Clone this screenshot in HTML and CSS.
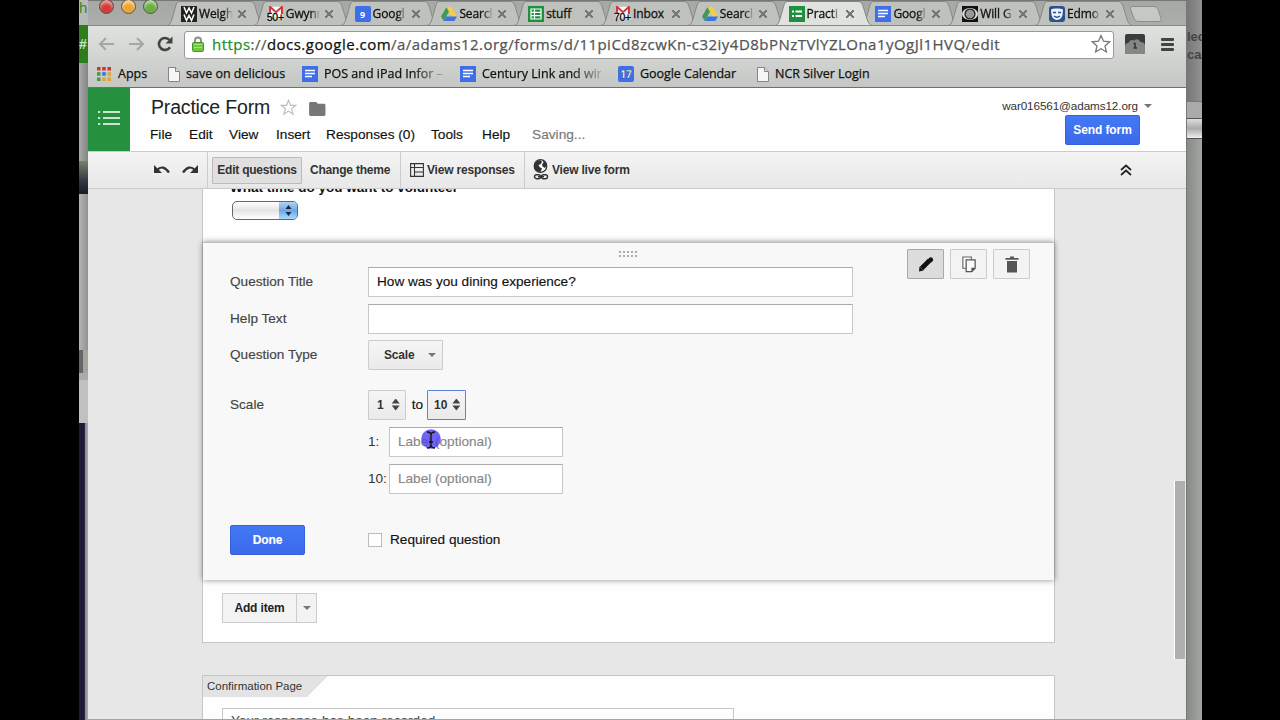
FILE: index.html
```html
<!DOCTYPE html>
<html lang="en">
<head>
<meta charset="utf-8">
<title>Practice Form</title>
<link rel="stylesheet" href="styles.css">
</head>
<body>
<svg width="0" height="0" class="defs">
  <symbol id="tab" viewBox="0 0 98 26"><path d="M0 25.5C3 25 4 22 5 19L9 5C10 2 11 1.500 13 1.500H83C86 1.500 87 3 88 6L92 19C93 22 94 25 98 25.500Z" stroke="#868886"/></symbol>
  <symbol id="doc" viewBox="0 0 16 16"><path fill="#3f6fe8" d="M0 0h16v16H0z"/><path stroke="#fff" stroke-width="1.500" d="M3 4.500h10M3 7.500h10M3 10.500h7"/></symbol>
  <symbol id="drive" viewBox="0 0 16 16"><path fill="#3c9b55" d="M5.500 1 0 10.500 2.700 15 8 5.500z"/><path fill="#f5cf3c" d="M5.500 1h5L16 10.500h-5.300z"/><path fill="#3f74dd" d="M5.300 10.500H16L13.300 15H2.700z"/></symbol>
  <symbol id="sheet" viewBox="0 0 16 16"><path fill="#1f8f40" d="M0 0h16v16H0z"/><path fill="none" stroke="#fff" stroke-width="1.200" d="M3 3h10v10H3zM3 6.300h10M3 9.600h10M6.500 3v10"/></symbol>
  <symbol id="form" viewBox="0 0 16 16"><path fill="#1f8f40" d="M0 0h16v16H0z"/><path stroke="#fff" stroke-width="1.800" d="M3 5.500h2M6.500 5.500H13M3 10h2M6.500 10H13"/></symbol>
  <symbol id="mail" viewBox="0 0 16 16"><path fill="#f7f7f5" stroke="#cfcac8" d="M.5.500h15v13H.5z"/><path fill="none" stroke="#d1303a" stroke-width="2.200" d="M1.200 9V1l6.800 6 6.800-6v8"/></symbol>
  <symbol id="page" viewBox="0 0 12 15"><path fill="#f6f6f6" stroke="#858585" d="M.5.500h7l4 4v10H.5z"/><path fill="#ddd" stroke="#858585" d="M7.500.500v4h4"/></symbol>
</svg>
<main class="desktop">
  <aside class="behind-left">
    <div class="bl bl-a">h</div><div class="bl bl-b">#</div><div class="bl bl-c"></div><div class="bl bl-d"></div><div class="bl bl-e"></div><div class="bl bl-f"></div><div class="bl bl-g"></div><div class="bl bl-h"></div>
  </aside>
  <section class="window">
    <div class="tabstrip">
      <div class="lights"><i class="red"></i><i class="amber"></i><i class="green"></i></div>
      <div class="tab"><svg class="shape"><use href="#tab"/></svg><svg class="fav" viewBox="0 0 16 16"><path fill="#222" d="M0 0h16v16H0z"/><path fill="none" stroke="#fff" stroke-width="1.500" d="M3 1 5.500 7 8 2l2.500 5L13 1M3 8.500l2.500 6 2.500-5 2.500 5 2.500-6"/></svg><span class="name">Weigh</span><b class="x"></b></div>
      <div class="tab"><svg class="shape"><use href="#tab"/></svg><span class="fav mail"><svg><use href="#mail"/></svg><em>50+</em></span><span class="name">Gwynn</span><b class="x"></b></div>
      <div class="tab"><svg class="shape"><use href="#tab"/></svg><span class="fav cal">9</span><span class="name">Googl</span><b class="x"></b></div>
      <div class="tab"><svg class="shape"><use href="#tab"/></svg><svg class="fav"><use href="#drive"/></svg><span class="name">Searcl</span><b class="x"></b></div>
      <div class="tab"><svg class="shape"><use href="#tab"/></svg><svg class="fav"><use href="#sheet"/></svg><span class="name whole">stuff</span><b class="x"></b></div>
      <div class="tab"><svg class="shape"><use href="#tab"/></svg><span class="fav mail"><svg><use href="#mail"/></svg><em>70+</em></span><span class="name whole">Inbox</span><b class="x"></b></div>
      <div class="tab"><svg class="shape"><use href="#tab"/></svg><svg class="fav"><use href="#drive"/></svg><span class="name">Searcl</span><b class="x"></b></div>
      <div class="tab active"><svg class="shape"><use href="#tab"/></svg><svg class="fav"><use href="#form"/></svg><span class="name">Practi</span><b class="x"></b></div>
      <div class="tab"><svg class="shape"><use href="#tab"/></svg><svg class="fav"><use href="#doc"/></svg><span class="name">Googl</span><b class="x"></b></div>
      <div class="tab"><svg class="shape"><use href="#tab"/></svg><svg class="fav" viewBox="0 0 16 16"><path fill="#111" d="M0 0h16v16H0z"/><ellipse cx="8" cy="8" rx="8" ry="6" fill="#ddd"/><circle cx="8" cy="8" r="5.600" fill="#222"/><circle cx="8" cy="8" r="4.300" fill="#999"/></svg><span class="name">Will G</span><b class="x"></b></div>
      <div class="tab"><svg class="shape"><use href="#tab"/></svg><svg class="fav" viewBox="0 0 16 16"><rect width="16" height="16" rx="3" fill="#2c4f8e"/><path fill="#e9f1fb" d="M2 3.500q3-1.500 6-1 3-.5 6 1l-.5 5.500q-1 4.500-5.500 5-4.500-.5-5.500-5z"/><path fill="none" stroke="#2c4f8e" stroke-width="1.300" d="M4 6.500h3M9 6.500h3M5 10q3 2.500 6 0"/></svg><span class="name">Edmo</span><b class="x"></b></div>
      <svg class="newtab" viewBox="0 0 34 18"><path fill="#c6c8c5" stroke="#8c8e8b" d="M3 1.500h22q3 0 4 3l3 9q1 3-2 3H9q-3 0-4-3L1.500 4q-.5-2 1.500-2.500z"/></svg>
    </div>
    <div class="chrome">
      <div class="navbar">
        <svg class="arrows" viewBox="0 0 48 16"><path fill="none" stroke="#a5a7a4" stroke-width="2" d="M16 8H2M8 2 2 8l6 6M31 8h14M39 2l6 6-6 6"/></svg>
        <svg class="reload" viewBox="0 0 16 16"><path fill="none" stroke="#444" stroke-width="2.600" d="M13 11.200A6 6 0 1 1 12.500 4"/><path fill="#444" d="M15.500.500v7h-7z"/></svg>
        <div class="omnibox">
          <svg class="lock" viewBox="0 0 12 16"><path fill="none" stroke="#8a8f94" stroke-width="2" d="M3 8V4.500a3 3 0 0 1 6 0V8"/><rect x=".5" y="6.500" width="11" height="9" rx="1" fill="#72c740" stroke="#459226"/><path stroke="#a4e17c" d="M2 8.500h8M2 11.500h8"/></svg>
          <span class="url"><span class="secure">https</span>://<span class="host">docs.google.com</span>/a/adams12.org/forms/d/11piCd8zcwKn-c32iy4D8bPNzTVlYZLOna1yOgJl1HVQ/edit</span>
          <svg class="star" viewBox="0 0 20 20"><path fill="#fff" stroke="#777" stroke-width="1.300" d="m10 1.500 2.500 5.700 6.200.600-4.700 4.100 1.400 6.100-5.400-3.200L4.600 18 6 11.900 1.300 7.800l6.200-.600z"/></svg>
        </div>
        <svg class="ext" viewBox="0 0 20 20"><rect width="20" height="20" rx="2" fill="#3b3d3c"/><path fill="#858786" d="M0 18v-5q0-4 3.500-4Q5 5 9 6.500q4-3 6.500 1.500Q20 8 20 12v6q0 2-2 2H2q-2 0-2-2z"/><path fill="none" stroke="#333" stroke-width="1.500" d="M8.500 9.500H10V14M8.500 14h3.500"/></svg>
        <div class="menu"><i></i><i></i><i></i></div>
      </div>
      <div class="bookmarks">
        <div class="bm b1"><svg viewBox="0 0 14 14"><path fill="#c8372d" d="M0 0h3.500v3.500H0zM5.200 0h3.500v3.500H5.200zM10.500 0H14v3.500h-3.500z"/><path fill="#3d9b4c" d="M0 5.200h3.500v3.500H0z"/><path fill="#3e70d5" d="M5.200 5.200h3.500v3.500H5.200z"/><path fill="#dfa52c" d="M10.500 5.200H14v3.500h-3.500zM5.200 10.500h3.500V14H5.200zM10.500 10.500H14V14h-3.500z"/><path fill="#3d9b4c" d="M0 10.500h3.500V14H0z"/></svg><span>Apps</span></div>
        <div class="bm b2"><svg class="pg"><use href="#page"/></svg><span>save on delicious</span></div>
        <div class="bm b3"><svg><use href="#doc"/></svg><span class="fade">POS and iPad Infor –</span></div>
        <div class="bm b4"><svg><use href="#doc"/></svg><span class="fade">Century Link and win</span></div>
        <div class="bm b5"><b class="cal">17</b><span>Google Calendar</span></div>
        <div class="bm b6"><svg class="pg"><use href="#page"/></svg><span>NCR Silver Login</span></div>
      </div>
    </div>
    <header class="header">
      <div class="logo"><svg viewBox="0 0 24 16"><path stroke="#fff" stroke-width="1.700" d="M6 2h17M6 8h17M6 14h17M1 2h2.200M1 8h2.200M1 14h2.200"/></svg></div>
      <div class="titles">
        <div class="titlerow"><h1>Practice Form</h1><svg class="tstar" viewBox="0 0 20 20"><path fill="#fff" stroke="#bbb" stroke-width="1.300" d="m10 1.500 2.300 6h6.200l-4.900 4 1.800 6.500-5.400-3.700L4.600 18l1.800-6.500-4.900-4h6.200z"/></svg><svg class="folder" viewBox="0 0 18 15"><path fill="#777" d="M1.500 0h6l2 2H16q1.500 0 1.500 1.500v10Q17.500 15 16 15H1.500Q0 15 0 13.500v-12Q0 0 1.500 0z"/></svg></div>
        <nav class="menubar"><span class="m1">File</span><span class="m2">Edit</span><span class="m3">View</span><span class="m4">Insert</span><span class="m5">Responses (0)</span><span class="m6">Tools</span><span class="m7">Help</span><span class="saving">Saving...</span></nav>
      </div>
      <div class="account"><div class="email">war016561@adams12.org<i class="caret"></i></div><button class="blue send">Send form</button></div>
    </header>
    <div class="toolbar">
      <div class="undo"><svg viewBox="0 0 16 10"><path fill="none" stroke="#333" stroke-width="2.200" d="M3 6q6-6 12 2.500"/><path fill="#333" d="M0 1v8h8z"/></svg><svg viewBox="0 0 16 10"><path fill="none" stroke="#333" stroke-width="2.200" d="M13 6Q7 0 1 8.500"/><path fill="#333" d="M16 1v8H8z"/></svg></div>
      <div class="modes"><span class="pressed">Edit questions</span><span class="theme">Change theme</span></div>
      <div class="responses"><svg viewBox="0 0 14 14"><path fill="none" stroke="#333" stroke-width="1.100" d="M.6.600h12.800v12.800H.6zM.6 4.500h12.800M4.500.600v12.800M4.500 9h9"/></svg>View responses</div>
      <div class="live"><svg viewBox="0 0 16 21"><circle cx="7.500" cy="7" r="6.300" fill="#fff" stroke="#333" stroke-width="1.200"/><path fill="#333" d="M1 7.500Q1.500 2 7 1l2 1.500L8 5 5.500 6l1 2L9 9.500 7.500 13Q1.500 12.500 1 7.500zM9.500 1q4 1.500 4.300 5.500L12 9l-2.500-1.500L9 5l1.500-1z"/><g fill="none" stroke="#333" stroke-width="1.400"><rect x="1.500" y="15.700" width="6" height="4" rx="2"/><rect x="8.500" y="15.700" width="6" height="4" rx="2"/><path d="M5 17.700h6"/></g></svg>View live form</div>
      <svg class="collapse" viewBox="0 0 12 12"><path fill="none" stroke="#222" stroke-width="1.700" d="m1 6 5-4.500L11 6M1 11l5-4.500 5 4.500"/></svg>
    </div>
    <div class="content">
      <div class="card questions">
        <div class="prev"><div class="ptitle">What time do you want to volunteer</div><div class="macselect"><i><svg viewBox="0 0 7 11"><path fill="#1b2a3c" d="m3.500 0 3 4h-6zM3.500 11l3-4h-6z"/></svg></i></div></div>
        <div class="editor">
          <div class="grip"><i></i><i></i><i></i><i></i><i></i><i></i><i></i><i></i><i></i><i></i></div>
          <div class="actions">
            <span class="act on"><svg viewBox="0 0 16 16"><path stroke="#111" stroke-width="4.600" d="m3.500 12 8-8"/><path fill="#111" d="m1 15 .500-5 4 4zM11 1.500q2-1.500 3.500 0t0 3.500L13 6l-3-3z"/></svg></span>
            <span class="act"><svg viewBox="0 0 16 18"><path fill="#fafafa" stroke="#666" stroke-width="1.200" d="M1.500 1h9v12h-9z"/><path fill="#fafafa" stroke="#555" stroke-width="1.300" d="M5 4h9.500v9L11 16.500H5z"/><path fill="#555" d="M10.500 12.500H15l-4.500 4.500z"/></svg></span>
            <span class="act"><svg viewBox="0 0 14 17"><path fill="#555" d="M5 .500h4V2h4.500v1.700H.5V2H5zM2 5h10v11.500H2z"/></svg></span>
          </div>
          <div class="row r1"><label>Question Title</label><div class="field wide">How was you dining experience?</div></div>
          <div class="row r2"><label>Help Text</label><div class="field wide"></div></div>
          <div class="row r3"><label>Question Type</label><div class="btn type">Scale<i class="caret"></i></div></div>
          <div class="row r4"><label>Scale</label><div class="btn num">1<i class="spin"></i></div><span class="to">to</span><div class="btn num focus">10<i class="spin"></i></div></div>
          <div class="row r5"><label></label><span class="n">1:</span><div class="field opt">Label (optional)</div></div>
          <div class="row r6"><label></label><span class="n">10:</span><div class="field opt">Label (optional)</div></div>
          <div class="row r7"><label><button class="blue done">Done</button></label><i class="check"></i><span class="req">Required question</span></div>
          <svg class="pointer" viewBox="0 0 22 24"><circle cx="11" cy="11" r="9.800" fill="#4b3ff0" opacity=".8"/><path fill="none" stroke="#111" stroke-width="1.300" d="M7 4q4 0 4 3 0-3 4-3M11 7v10M7 20q4 0 4-3 0 3 4 3M9 14h4"/></svg>
        </div>
        <div class="additem"><span>Add item</span><b><i class="caret"></i></b></div>
      </div>
      <div class="card confirm"><div class="ctab">Confirmation Page</div><div class="cfield">Your response has been recorded.</div></div>
      <i class="scroll"></i>
    </div>
  </section>
  <aside class="behind-right"><div class="br-a">lec<br>ca</div><div class="br-b"></div><div class="br-c"></div><div class="br-d"></div></aside>
</main>
</body>
</html>
```

FILE: styles.css
```css
*{box-sizing:border-box}
body{margin:0;background:#000;font-family:"Liberation Sans",Arial,sans-serif;overflow:hidden}
svg{display:block;flex:none}
i,em{font-style:normal}
.defs{position:absolute}
.desktop{display:flex;width:1280px;height:720px;padding-left:79px;background:#000;overflow:hidden}
.behind-left{width:9px;display:flex;flex-direction:column;flex:none;overflow:hidden}
.bl{flex:none;overflow:hidden}
.bl-a{height:25px;background:#b8bab8;color:#348a24;font:15px/15px "Liberation Sans",sans-serif}
.bl-b{height:38px;background:#2d7d1d;color:#c9dfc5;font:bold 14px/38px "Liberation Sans",sans-serif}
.bl-c{height:98px;background:linear-gradient(90deg,#aaa,#838383)}
.bl-d{height:33px;background:linear-gradient(#75806f,#333842 60%,#161b28)}
.bl-e{height:156px;background:linear-gradient(90deg,#b5b5b5,#929292)}
.bl-f{height:23px;background:linear-gradient(90deg,#666 45%,#a4a49a 45%)}
.bl-g{height:50px;background:#c0c0c0;border-top:7px solid #aaa}
.bl-h{flex:1;background:linear-gradient(90deg,#1d1b35 60%,#8c8993 70%,#aaa)}
.window{width:1098px;flex:none;height:720px;display:flex;flex-direction:column;border-bottom:1px solid #a4a6a4;overflow:hidden}
.behind-right{width:16px;flex:none;display:flex;flex-direction:column;border-left:1px solid #777;background:linear-gradient(90deg,#888b88,#a2a5a2);overflow:hidden}
.br-a{height:101px;padding-top:28px;color:#444;font:bold 13px/18px "Liberation Sans",sans-serif;background:linear-gradient(90deg,#777,#929292)}
.br-b{height:17px;background:#a9aba9;border-top:1px solid #777}
.br-c{height:21px;background:linear-gradient(#ddd,#aaa,#eee);border:solid #555;border-width:1px 0}
.br-d{flex:1}
.tabstrip{height:26px;flex:none;display:flex;background:linear-gradient(#a6a8a6,#acaeac);border-top:1px solid #777;border-bottom:1px solid #868886}
.lights{width:79px;flex:none;display:flex;gap:7px;padding-left:11px;margin-top:-2px}
.lights i{width:15px;height:15px;border-radius:50%;border:1px solid #555;box-shadow:inset 0 3px 3px #fff8}
.red{background:#d33a38}.amber{background:#eca633}.green{background:#6cad44}
.tab{width:86.800px;height:25px;flex:none;display:flex;align-items:center;padding-left:14px;position:relative;margin-top:-1px}
.shape{position:absolute;left:0;top:0;width:98px;height:26px;fill:#bfc1bd}
.active{z-index:2}.active .shape{fill:#dfe2de}
.fav{width:16px;height:16px;position:relative;margin-top:3px;flex:none}
.mail svg{width:16px;height:14px}
.mail em{position:absolute;left:-1px;top:5px;font:10.500px/12px "Liberation Sans",sans-serif;-webkit-text-stroke:.3px #000;letter-spacing:-.3px;color:#000;text-shadow:0 0 1px #fff,0 0 2px #fff}
.cal{display:block;background:#3f6fe8;color:#fff;font:bold 9px/17px "Open Sans",sans-serif;text-align:center;border-radius:2px}
.name{position:relative;width:34px;margin-left:2px;margin-top:2px;white-space:nowrap;font:12px/18px "Open Sans",sans-serif;-webkit-text-stroke:.3px #111;color:#111;letter-spacing:-.1px;-webkit-mask:linear-gradient(90deg,#000 72%,#0000 100%);mask:linear-gradient(90deg,#000 72%,#0000 100%)}
.whole{-webkit-mask:none;mask:none}
.x{position:relative;width:8px;height:8px;margin:3px 0 0 5px;background:linear-gradient(45deg,transparent 42%,#777 42% 58%,transparent 58%),linear-gradient(-45deg,transparent 42%,#777 42% 58%,transparent 58%)}
.newtab{width:34px;height:18px;margin:4px 0 0 7px}
.chrome{height:62px;flex:none;background:linear-gradient(#dfe2de,#c4c7c3);border-bottom:1px solid #6e706e}
.navbar{display:flex;align-items:center;height:37px;padding-left:10px}
.arrows{width:48px;height:16px;margin-top:-1px}
.reload{width:16px;height:16px;margin-left:11px;margin-top:-1px}
.omnibox{width:930px;height:28px;margin-left:11px;display:flex;align-items:center;background:#fff;border:1px solid #999;border-radius:3px;padding-left:7px}
.lock{width:12px;height:16px;margin-top:-2px}
.url{width:787px;margin:-2px 0 0 8px;color:#555;font:15px/24px "Open Sans",sans-serif;white-space:nowrap;letter-spacing:.47px;-webkit-text-stroke:.25px}
.secure{color:#23902b}.host{color:#111}
.star{width:20px;height:20px;margin-left:92px;margin-top:-1px}
.ext{width:20px;height:20px;margin-left:11px;margin-top:-1px}
.menu{width:13px;display:grid;gap:2px;margin-left:16px}.menu i{height:3px;background:#444;border-radius:1px}
.bookmarks{display:flex;height:22px;padding-left:9px}
.bm{display:flex;align-items:center;flex:none;font:12.500px/20px "Open Sans",sans-serif;color:#111;-webkit-text-stroke:.25px #111;white-space:nowrap}
.bm svg,.bm b{width:16px;height:16px}.bm .pg{width:12px;height:15px}
.bm span{margin-left:6px}
.b1{width:71px}.b1 svg{width:14px!important;height:14px!important}.b1 span{margin-left:7px}
.b2{width:134px}.b3{width:158px}.b4{width:158px}.b5{width:139px;letter-spacing:-.05px}.b5 b{letter-spacing:0;font-size:10px}
.b5 span{letter-spacing:-.04px}
.fade{width:119px;-webkit-mask:linear-gradient(90deg,#000 75%,#0003);mask:linear-gradient(90deg,#000 75%,#0003)}
.header{height:63px;flex:none;display:flex;background:#fefefe}
.logo{width:42px;height:63px;background:#25913f;padding:22px 0 0 9px;flex:none}.logo svg{width:24px;height:16px}
.titles{width:800px;padding-left:20px}
.titlerow{display:flex;height:36px;align-items:center;padding-top:2px}
h1{margin:0;font-weight:400;font-size:19.500px;line-height:24px;width:130px;letter-spacing:-.18px;padding-left:1px;color:#222;white-space:nowrap}
.tstar{width:17px;height:17px;margin-top:1px}.folder{width:17px;height:14px;margin-left:12px;margin-top:3px}
.menubar{display:flex;font-size:13.700px;line-height:22px;color:#111;white-space:nowrap;-webkit-text-stroke:.15px}
.m1{width:39px}.m2{width:40px}.m3{width:47px}.m4{width:50px}.m5{width:105px}.m6{width:51px}.m7{width:50px}.saving{color:#777}
.account{flex:1;padding:10px 34px 0 0;display:flex;flex-direction:column;align-items:flex-end}
.email{font-size:11.700px;line-height:15px;letter-spacing:-.1px;color:#333;display:flex;align-items:center;gap:6px;white-space:nowrap}
.caret{border:4px solid transparent;border-top-color:#777;border-bottom:0}
.blue{font:bold 12px/28px "Liberation Sans",sans-serif;color:#fff;background:linear-gradient(#4379f5,#3b69ea);border:1px solid #3562d8;border-radius:2px;padding:0;text-align:center}
.send{width:75px;height:30px;margin:2px 12px 0 0;letter-spacing:-.1px}
.toolbar{height:38px;flex:none;display:flex;align-items:center;background:linear-gradient(#f3f4f3,#e7e8e7);border:solid #cacbca;border-width:1px 0;font:bold 12px/15px "Liberation Sans",sans-serif;letter-spacing:-.2px;color:#333;white-space:nowrap}
.undo{width:120px;height:36px;padding:12px 0 0 66px;display:flex;gap:12px;border-right:1px solid #ccc}.undo svg{width:16px;height:10px}
.modes{width:193px;height:36px;display:flex;align-items:center;padding-left:4px;border-right:1px solid #ccc}
.pressed{width:90px;height:27px;line-height:25px;text-align:center;background:#e0e0e0;border:1px solid #bbb;border-radius:1px;letter-spacing:-.24px}.theme{margin-left:8px}
.responses{width:124px;height:36px;display:flex;align-items:center;padding-left:9px;gap:3px;border-right:1px solid #ccc}.responses svg{width:14px;height:14px}
.live{width:508px;padding-left:8px;display:flex;align-items:center;gap:3px}.live svg{width:16px;height:21px;margin-top:-1px}
.collapse{width:12px;height:12px;margin-left:87px;margin-top:-1px}
.content{flex:1;position:relative;background:#e6e7e6;overflow:hidden;padding-left:114px}
.card{width:853px;background:#fefefe;border:1px solid #c5c6c5}
.questions{height:454px;border-top:0}
.prev{height:53px;padding-left:28px;overflow:hidden}
.ptitle{font:bold 13.500px/15px "Liberation Sans",sans-serif;margin:-9px 0 0 -1px;color:#111;height:21px}
.macselect{width:66px;height:19px;margin-left:1px;border:1px solid #666;border-radius:5px;overflow:hidden;background:linear-gradient(#fff,#e4e4e4 50%,#fff);display:flex;justify-content:flex-end}
.macselect i{width:18px;background:linear-gradient(#b3d3f2,#6aa9e4 50%,#a7dcff);display:grid;place-items:center}.macselect svg{width:7px;height:11px}
.editor{height:338px;background:#f7f8f7;border-top:1px solid #bcbdbc;box-shadow:0 0 6px #0007;position:relative;padding:8px 0 0 27px}
.grip{display:grid;grid-template-columns:repeat(5,2px);gap:2px;height:6px;margin-left:389px}.grip i{width:2px;height:2px;background:#aaa}
.actions{position:absolute;left:704px;top:6px;display:flex;gap:6px}
.act{width:37px;height:30px;border:1px solid #ccc;border-radius:1px;background:#f3f3f3;display:grid;place-items:center}.act svg{width:16px;height:17px}
.on{background:#dcdcdc;border-color:#aaa}
.row{display:flex;align-items:center;height:30px;font-size:13.600px;white-space:nowrap}
.row label{width:138px;color:#444;flex:none;padding-bottom:1px;-webkit-text-stroke:.15px}
.r1{margin-top:10px}.r2{margin-top:7px}.r3{margin-top:6px}.r4{margin-top:20px}.r5{margin-top:7px}.r6{margin-top:7px}.r7{margin-top:31px}
.field{height:30px;border:1px solid #c8c8c8;border-top-color:#aaa;background:#fff;padding-left:8px;line-height:28px;color:#111;-webkit-text-stroke:.15px}
.wide{width:485px}.opt{width:174px;color:#888}
.btn{height:30px;border:1px solid #ccc;border-radius:1px;background:linear-gradient(#f5f5f5,#eaeaea);display:flex;align-items:center;font-size:12px;font-weight:bold;color:#333}
.btn{padding-bottom:1px}
.type{width:75px;padding-left:15px;gap:14px;letter-spacing:-.2px}
.num{width:38px;padding-left:8px;gap:8px}.focus{width:39px;border:1px solid #5a80e0;padding-left:6px;gap:5px}
.spin{width:8px;height:12px;background:#444;clip-path:polygon(50% 0,100% 42%,0 42%,0 58%,100% 58%,50% 100%,0 58%,0 42%)}
.to{width:21px;padding:0 0 2px 2px;text-align:center;color:#111;-webkit-text-stroke:.15px}
.n{width:21px;color:#333;padding-bottom:1px}
.done{width:75px;height:30px;display:block;letter-spacing:-.1px}
.check{width:14px;height:14px;border:1px solid #bbb;background:#fff}.req{margin-left:8px;color:#111;padding-bottom:2px;-webkit-text-stroke:.15px}
.pointer{position:absolute;left:217px;top:185px;width:22px;height:24px}
.additem{width:95px;height:30px;margin:13px 0 0 19px;border:1px solid #ccc;background:#f3f3f3;display:flex;font:bold 12px/28px "Liberation Sans",sans-serif;color:#222;letter-spacing:-.15px}
.additem span{width:74px;text-align:center;border-right:1px solid #ccc}.additem b{flex:1;display:grid;place-items:center}
.confirm{height:80px;margin-top:32px}
.ctab{width:125px;height:21px;background:#e2e3e2;clip-path:polygon(0 0,100% 0,104px 100%,0 100%);font-size:11.500px;line-height:20px;padding-left:4px;color:#333}
.cfield{width:512px;height:30px;margin:11px 0 0 19px;border:1px solid #c8c8c8;font-size:13.600px;line-height:23px;padding-left:8px;color:#444}
.scroll{position:absolute;right:1px;top:292px;width:10px;height:178px;background:#afafaf;box-shadow:-1px 0 1px #fff}
```
